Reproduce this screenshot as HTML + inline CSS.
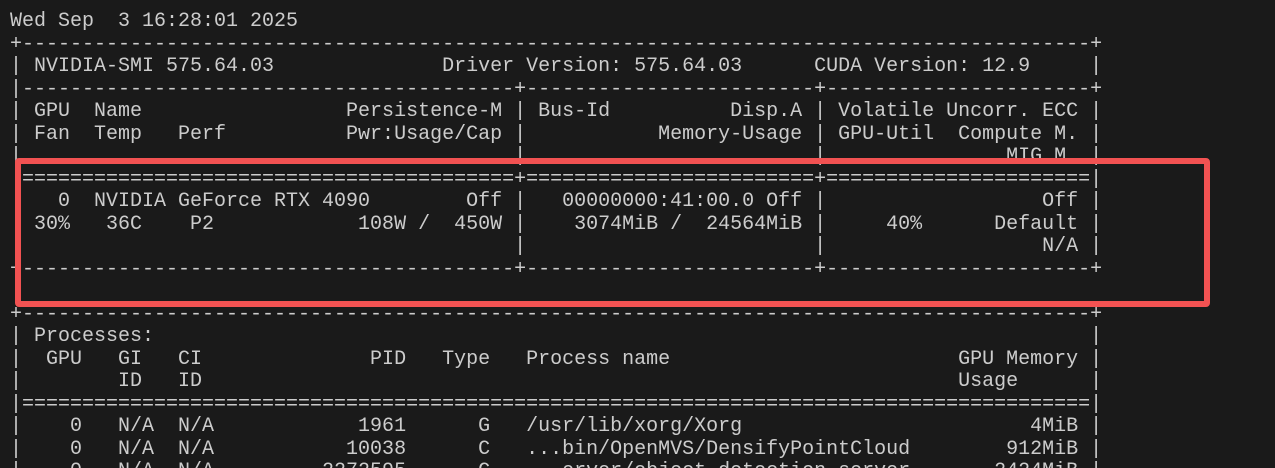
<!DOCTYPE html>
<html><head><meta charset="utf-8"><style>
html,body{margin:0;padding:0;background:#1a1a1a;width:1275px;height:468px;overflow:hidden;position:relative}
pre{position:absolute;left:10px;top:11px;margin:0;font-family:"Liberation Mono",monospace;font-size:20px;line-height:22.5px;color:#cccccc;white-space:pre}
.box{position:absolute;left:15px;top:158px;width:1183px;height:137px;border:6px solid #f25252;border-radius:4px}
</style></head><body>
<pre>Wed Sep  3 16:28:01 2025
+-----------------------------------------------------------------------------------------+
| NVIDIA-SMI 575.64.03              Driver Version: 575.64.03      CUDA Version: 12.9     |
|-----------------------------------------+------------------------+----------------------+
| GPU  Name                 Persistence-M | Bus-Id          Disp.A | Volatile Uncorr. ECC |
| Fan  Temp   Perf          Pwr:Usage/Cap |           Memory-Usage | GPU-Util  Compute M. |
|                                         |                        |               MIG M. |
|=========================================+========================+======================|
|   0  NVIDIA GeForce RTX 4090        Off |   00000000:41:00.0 Off |                  Off |
| 30%   36C    P2            108W /  450W |    3074MiB /  24564MiB |     40%      Default |
|                                         |                        |                  N/A |
+-----------------------------------------+------------------------+----------------------+

+-----------------------------------------------------------------------------------------+
| Processes:                                                                              |
|  GPU   GI   CI              PID   Type   Process name                        GPU Memory |
|        ID   ID                                                               Usage      |
|=========================================================================================|
|    0   N/A  N/A            1961      G   /usr/lib/xorg/Xorg                        4MiB |
|    0   N/A  N/A           10038      C   ...bin/OpenMVS/DensifyPointCloud        912MiB |
|    0   N/A  N/A         2272595      C   ...erver/object_detection_server       2424MiB |</pre>
<div class="box"></div>
</body></html>
